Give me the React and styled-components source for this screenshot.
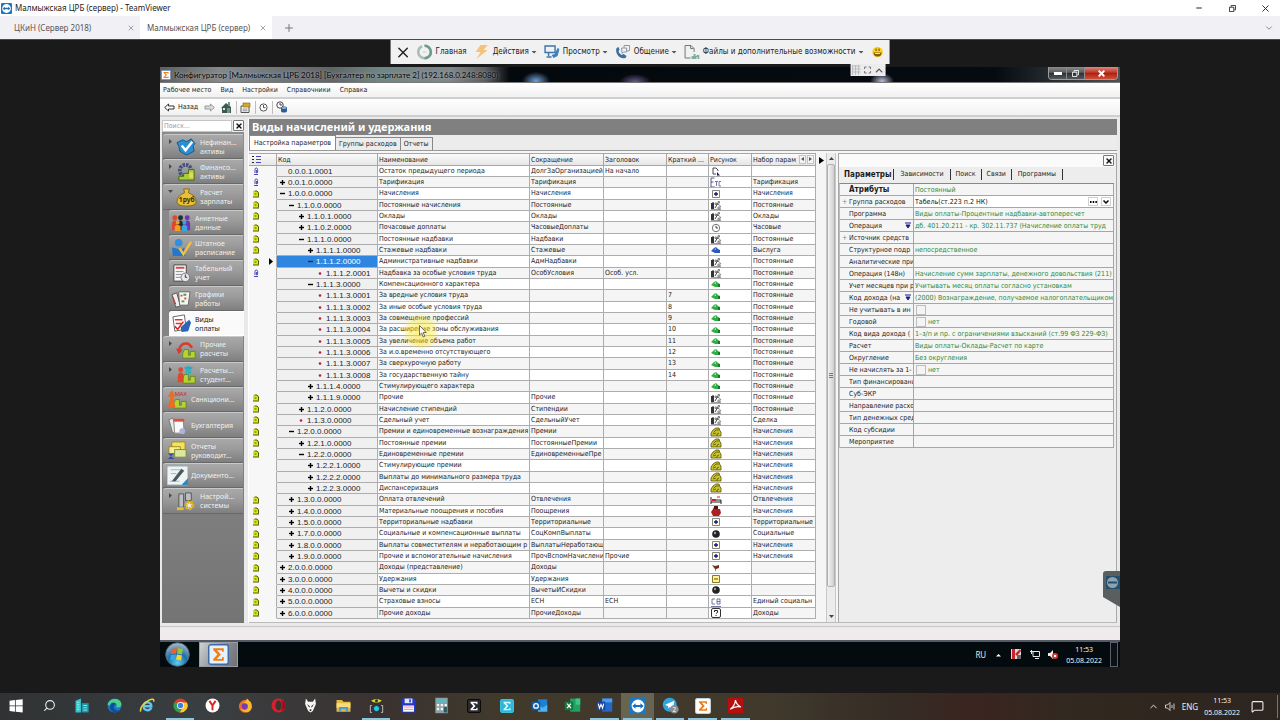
import React from "react";
import styled, { createGlobalStyle, css } from "styled-components";
import { X, Plus, Minus, ChevronDown, ChevronUp, Search, MessageSquare } from "lucide-react";

const TAHOMA = '"DejaVu Sans Condensed", "DejaVu Sans", sans-serif';
const SEGOE = '"Noto Sans", "Open Sans", sans-serif';

const GlobalStyle = createGlobalStyle`
  * { box-sizing: border-box; }
  body { margin: 0; background: #1a1a1a; }
  button, input { font: inherit; color: inherit; margin: 0; padding: 0; border: none; background: none; }
  svg { display: block; flex: none; }
  table { border-spacing: 0; table-layout: fixed; width: 100%; }
`;

const Page = styled.div`
  min-height: 100vh;
  display: flex;
  flex-direction: column;
  font: 7px/10px ${TAHOMA};
  color: #1c1c1c;
`;

/* ---------- TeamViewer window ---------- */

const TopBar = styled.header`
  display: flex;
  align-items: center;
  gap: 3px;
  height: 16px;
  padding-left: 1px;
  background: #fff;
  font: 8px/14px ${SEGOE};
`;

const TopTitle = styled.span`
  flex: 1;
`;

const TopButton = styled.button`
  width: 30px;
  height: 14px;
  display: flex;
  align-items: center;
  justify-content: center;
  color: #222;
`;

const SessionTabs = styled.nav`
  display: flex;
  align-items: stretch;
  height: 23px;
  background: #f1f0f5;
  color: #555;
  font: 8px/22px ${SEGOE};
`;

const SessionTab = styled.div`
  display: flex;
  align-items: center;
  justify-content: space-between;
  width: ${(p) => (p.$active ? 132 : 140)}px;
  padding: 0 4px 0 ${(p) => (p.$active ? 7 : 14)}px;
  background: ${(p) => (p.$active ? "#fff" : "transparent")};
`;

const TabsSpacer = styled.div`
  flex: 1;
`;

const TabsButton = styled.button`
  width: ${(p) => p.$wide || 10}px;
  display: flex;
  align-items: center;
  justify-content: center;
  color: #777;
`;

const Stage = styled.main`
  position: relative;
  flex: 1;
  display: flex;
  flex-direction: column;
  align-items: center;
  padding: 27px 0 26px;
  background: #1a1a1a;
  border-top: 1px solid #4a4a4a;
`;

const FloatBar = styled.div`
  position: absolute;
  top: 0;
  left: 50%;
  transform: translateX(-50%);
  z-index: 2;
  display: flex;
  align-items: center;
  gap: 7px;
  height: 24px;
  padding: 0 5px 0 6px;
  background: #f1f1f1;
  font: 8px/12px ${TAHOMA};
  white-space: nowrap;
  color: #222;
`;

const FloatItem = styled.button`
  display: flex;
  align-items: center;
  gap: 3px;
`;

const FloatHandle = styled.div`
  position: absolute;
  top: 24px;
  right: 4px;
  display: flex;
  align-items: center;
  gap: 2px;
  height: 12px;
  padding: 0 1px;
  background: #ececec;
`;

/* ---------- remote desktop ---------- */

const Remote = styled.section`
  position: relative;
  flex: 1;
  width: 75%;
  display: flex;
  flex-direction: column;
  background: #04090d;
`;

const WinTitle = styled.div`
  display: flex;
  align-items: center;
  gap: 3px;
  height: 16px;
  padding: 0 2px 0 1px;
  border-bottom: 1px solid #777;
  background:
    radial-gradient(ellipse 14px 9px at 376px 14px, #6f9fd8, transparent),
    radial-gradient(ellipse 16px 8px at 475px 15px, #6b5a8a, transparent),
    radial-gradient(ellipse 12px 8px at 722px 14px, #b9bcd8, transparent),
    linear-gradient(90deg, #5c6063 0, #83888a 60px, #5f6466 170px, #6f8583 220px, #80868a 290px, #5b5f63 325px, #04090d 350px, #060b12 87%, #4d5256 100%);
  font: 8px/14px Lato, ${SEGOE};
  color: #050505;
`;

const WinCaption = styled.span`
  flex: 1;
  text-shadow: 0 0 3px #bbb;
`;

const WinButtons = styled.div`
  display: flex;
  align-self: flex-start;
  height: 13px;
  border: 1px solid #9a9c9e;
  border-top: none;
  border-radius: 0 0 4px 4px;
  overflow: hidden;
`;

const WinButton = styled.button`
  display: flex;
  align-items: center;
  justify-content: center;
  width: ${(p) => (p.$close ? 32 : 18)}px;
  border-right: ${(p) => (p.$close ? "none" : "1px solid #8a8c8e")};
  background: ${(p) =>
    p.$close
      ? "linear-gradient(#d98a7c, #c0392b 45%, #a8200f 50%, #d0503a)"
      : "linear-gradient(#8a8c8e, #5a5c5f 45%, #2c2e31 50%, #55585c)"};
`;

const Strip = styled.div`
  display: flex;
  align-items: center;
  height: 17px;
  background: linear-gradient(#fff, #f1f1f1);
  border-bottom: 2px solid #cfcfcf;
`;

const MenuStrip = styled(Strip)`
  gap: 9px;
  height: 16px;
  padding-left: 3px;
`;

const ToolStrip = styled(Strip)`
  height: 18px;
  padding-left: 4px;
`;

const MenuItem = styled.button`
  line-height: 12px;
`;

const ToolButton = styled.button`
  display: flex;
  align-items: center;
  gap: 3px;
  height: 13px;
  padding: 0 4px 0 0;
  margin-right: ${(p) => (p.$sep ? 3 : 2)}px;
  border-right: ${(p) => (p.$sep ? "1px solid #bdbdbd" : "none")};
`;

const Body = styled.div`
  flex: 1;
  display: grid;
  grid-template-columns: 82px minmax(0, 1fr);
  gap: 4px;
  padding: 2px 3px 3px 2px;
  background: #e9e9e9;
`;

const Side = styled.aside`
  display: flex;
  flex-direction: column;
`;

const SearchRow = styled.div`
  display: flex;
  align-items: center;
  height: 13px;
  gap: 1px;
`;

const SearchInput = styled.input`
  flex: 1;
  min-width: 0;
  height: 12px;
  padding: 0 1px;
  background: #fff;
  border: 1px solid #c4c4c4;
  &::placeholder { color: #999; opacity: 1; }
`;

const CloseBox = styled.button`
  display: flex;
  align-items: center;
  justify-content: center;
  width: 11px;
  height: 11px;
  border: 1px solid #777;
  border-radius: 1px;
  background: #fafafa;
  color: #111;
`;

const NavList = styled.nav`
  flex: 1;
  padding: 2px 1px 0;
  background: linear-gradient(#8c8c8c, #7d7d7d 80%, #747474);
`;

const NavItem = styled.button`
  display: flex;
  align-items: center;
  gap: 3px;
  width: ${(p) => (p.$sub ? 74 : 80)}px;
  height: 25px;
  margin-left: ${(p) => (p.$sub ? 6 : 0)}px;
  padding-left: ${(p) => (p.$sub ? 2 : 4)}px;
  text-align: left;
  font: 7px/9px ${SEGOE};
  white-space: pre-line;
  color: #f0f0f0;
  border-top: 1px solid #c9c9c9;
  border-bottom: 1px solid #686868;
  border-radius: 3px 0 0 0;
  background: linear-gradient(#a9a9a9, #9a9a9a 45%, #7f7f7f);
  &:nth-child(3n) { height: 26px; }
  ${(p) =>
    p.$active &&
    css`
      width: 75px;
      color: #222;
      background: #fafafa;
      border-color: #fff;
    `}
`;

const NavArrow = styled.svg`
  align-self: flex-start;
  margin: 4px 0 0 1px;
`;

const Content = styled.div`
  display: flex;
  flex-direction: column;
  min-width: 0;
  border-left: 1px solid #fff;
`;

const Heading = styled.h1`
  margin: 0;
  height: 16px;
  padding-left: 3px;
  background: #808080;
  color: #fff;
  font: bold 11px/16px "Noto Sans", sans-serif;
`;

const ViewTabs = styled.div`
  display: flex;
  align-items: flex-end;
  height: 16px;
  padding-left: 1px;
  border-bottom: 1px solid #999;
  background: #ececec;
`;

const ViewTab = styled.button`
  height: ${(p) => (p.$active ? 15 : 13)}px;
  padding: 0 ${(p) => (p.$active ? 4 : 3)}px;
  border: 1px solid #888;
  border-bottom: none;
  margin-left: -1px;
  background: ${(p) => (p.$active ? "#fff" : "#ececec")};
`;

const Split = styled.div`
  flex: 1;
  display: grid;
  grid-template-columns: minmax(0, 1fr) 10px 10px 281px;
  padding-top: 2px;
  background: #f6f6f6;
  border-bottom: 1px solid #bbb;
`;

const DataTable = styled.table`
  align-self: start;
  th {
    height: 13px;
    padding: 0 1px;
    font-weight: normal;
    text-align: left;
    white-space: nowrap;
    overflow: hidden;
    border: solid #a6a6a6;
    border-width: 1px 1px 1px 0;
    background: linear-gradient(#fbfbfb, #e6e6e6);
  }
  td {
    height: 11px;
    padding: 0 1px;
    line-height: 9px;
    white-space: nowrap;
    overflow: hidden;
    border: solid #adadad;
    border-width: 0 1px 1px 0;
    vertical-align: middle;
    background: #fff;
  }
  tr:nth-child(3n) td { height: 12px; }
  tr:nth-child(even) td { background: #f5f5f5; }
`;

const Col = styled.col`
  width: ${(p) => (p.$w ? `${p.$w}px` : "auto")};
`;

const DataRow = styled.tr`
  && td:nth-child(1),
  && td:nth-child(2) {
    background: #f7f7f7;
    border-color: transparent;
  }
  && td:nth-child(2) { border-right-color: #adadad; }
  && td:nth-child(1) { padding-left: 4px; }
  && td:nth-child(3) {
    background: ${(p) => (p.$selected ? "#2f86e0" : "#f0f0f0")};
    color: ${(p) => (p.$selected ? "#fff" : "inherit")};
  }
  && td:nth-child(8) { background: #fff; }
`;

const Code = styled.span`
  display: flex;
  align-items: center;
  padding-left: ${(p) => Math.round(p.$depth * 9.4)}px;
  font: 8px/9px "Liberation Sans", sans-serif;
`;

const Twig = styled.svg`
  margin: 0 2px 0 1px;
  color: ${(p) => (p.$dark ? "#14305a" : "#000")};
`;

const HeaderPager = styled.span`
  float: right;
  display: flex;
  gap: 1px;
  height: 9px;
  padding-left: 1px;
  background: #ececec;
`;

const PagerButton = styled.button`
  width: 7px;
  height: 9px;
  border: 1px solid #c4c4c4;
  background: #f4f4f4;
  display: flex;
  align-items: center;
  justify-content: center;
`;

const Gutter = styled.div`
  padding: 4px 0 0 3px;
  background: #f5f5f5;
`;

const ScrollBar = styled.div`
  display: flex;
  flex-direction: column;
  align-items: center;
  background: #ececec;
  border: solid #c8c8c8;
  border-width: 0 1px;
`;

const ScrollArrow = styled.button`
  width: 8px;
  height: 11px;
  display: flex;
  align-items: center;
  justify-content: center;
`;

const Thumb = styled.div`
  flex: 1;
  width: 8px;
  margin-bottom: 24px;
  display: flex;
  align-items: center;
  justify-content: center;
  border: 1px solid #b0b0b0;
  border-radius: 2px;
  background: linear-gradient(90deg, #f2f2f2, #cfcfcf);
`;

const Props = styled.aside`
  min-width: 0;
  display: flex;
  flex-direction: column;
  margin-left: 2px;
  padding-right: 2px;
  border: solid #a8a8a8;
  border-width: 1px 1px 0 1px;
  background: #ededed;
`;

const PropsTop = styled.div`
  display: flex;
  justify-content: flex-end;
  align-items: center;
  height: 13px;
  background: #fafafa;
`;

const PropTabs = styled.div`
  display: flex;
  align-items: center;
  height: 15px;
  margin-bottom: 1px;
`;

const PropTab = styled.button`
  height: 11px;
  padding: 0 ${(p) => (p.$wide ? 6 : 5)}px;
  line-height: 11px;
  border-right: 1px solid #333;
  ${(p) =>
    p.$active &&
    css`
      padding: 0 2px 0 5px;
      font-weight: bold;
      font-size: 8px;
    `}
`;

const PropTable = styled.table`
  border-top: 1px solid #888;
  border-left: 1px solid #bbb;
  th, td {
    height: 12px;
    padding: 0 1px;
    font-weight: normal;
    text-align: left;
    line-height: 10px;
    white-space: nowrap;
    overflow: hidden;
    border: solid #a6a6a6;
    border-width: 0 1px 1px 0;
    background: #f5f5f5;
  }
  th { padding: 0; }
  td { color: #2c8a3c; }
`;

const PropName = styled.span`
  display: flex;
  align-items: center;
  font-weight: ${(p) => (p.$bold ? "bold" : "normal")};
  font-size: ${(p) => (p.$bold ? 8 : 7)}px;
`;

const PropSign = styled.span`
  flex: none;
  width: 9px;
  padding-left: 2px;
  color: #888;
`;

const PropText = styled.span`
  flex: 1;
  min-width: 0;
  overflow: hidden;
`;

const EditCell = styled.span`
  display: flex;
  align-items: center;
  gap: 3px;
  height: 11px;
  margin: 0 -1px;
  padding: 0 2px 0 1px;
  background: #fff;
  color: #111;
`;

const EditInput = styled.input`
  flex: 1;
  min-width: 0;
  height: 10px;
`;

const SmallButton = styled.button`
  width: 10px;
  height: 9px;
  border: 1px solid #d0d0d0;
  display: flex;
  align-items: center;
  justify-content: center;
`;

const CheckLabel = styled.label`
  display: flex;
  align-items: center;
  gap: 2px;
`;

const CheckBox = styled.input`
  appearance: none;
  width: 10px;
  height: 10px;
  margin-left: 1px;
  border: 1px solid #bdbdbd;
  background: #f4f4f4;
`;

const StatusBar = styled.div`
  height: 14px;
  background: #efebec;
  border-top: 1px solid #c6c6c6;
`;

const RemoteTaskbar = styled.footer`
  display: flex;
  align-items: center;
  height: 27px;
  padding-left: 5px;
  border-top: 2px solid #525b63;
  background: #040b0f;
  color: #e8e8e8;
  font: 7px/10px ${SEGOE};
`;

const OrbButton = styled.button`
  margin-right: 9px;
`;

const RunningApp = styled.button`
  width: 39px;
  height: 25px;
  display: flex;
  align-items: center;
  justify-content: center;
  border: 1px solid #999da1;
  background: linear-gradient(120deg, #cfd1d4, #85898d 60%, #6d7175);
`;

const Tray = styled.div`
  display: flex;
  align-items: center;
  gap: ${(p) => p.$gap}px;
  margin-left: auto;
`;

const TrayLang = styled.span`
  font-size: 8px;
`;

const Clock = styled.time`
  text-align: center;
  white-space: pre-line;
  line-height: ${(p) => p.$line || 11}px;
  color: #f4f4f4;
`;

const ShowDesktop = styled.button`
  width: 8px;
  height: 25px;
  margin-right: 2px;
  border: 1px solid #596067;
  background: #0b1116;
`;

const SideFlap = styled.div`
  position: absolute;
  right: 0;
  top: 504px;
`;

const Pointer = styled.div`
  position: absolute;
  left: 242px;
  top: 246px;
  width: 38px;
  height: 38px;
  border-radius: 50%;
  padding: 12px 0 0 17px;
  background: radial-gradient(rgba(250, 232, 40, 0.6), rgba(250, 235, 60, 0.4) 50%, transparent 70%);
`;

/* ---------- host taskbar ---------- */

const Taskbar = styled.footer`
  display: flex;
  align-items: stretch;
  height: 27px;
  padding-right: 2px;
  background: linear-gradient(90deg, #303233, #3a3f42 16%, #3a3230 30%, #413a2b 40%, #40392c 60%, #352c25 70%, #3a2420 76%, #31291f 84%, #2d251f);
  color: #eee;
  font: 7px/11px ${SEGOE};
`;

const TaskButton = styled.button`
  width: 33px;
  display: flex;
  align-items: center;
  justify-content: center;
  border-bottom: 2px solid transparent;
  &:nth-child(3n) { width: 32px; }
  ${(p) => p.$running && css`
    border-image: linear-gradient(90deg, transparent 10%, #8cc6de 10%, #8cc6de 90%, transparent 90%) 1;
    border-width: 0 0 2px;
    border-style: solid;
  `}
  ${(p) => p.$active && css`background: #686452;`}
`;

const DesktopEdge = styled.button`
  width: 4px;
  height: 23px;
  border-right: 1px solid #777;
`;

/* ---------- drawings ---------- */

const TeamViewerMark = ({ size = 11 }) => (
  <svg width={size} height={size} viewBox="0 0 20 20">
    <rect width="20" height="20" rx="2" fill="#1a78c8" />
    <circle cx="10" cy="10" r="8" fill="#fff" />
    <path d="M2.8 10 7 6.6v2.2h6V6.6l4.2 3.4-4.2 3.4v-2.2H7v2.2z" fill="#1a6fc0" />
  </svg>
);

const SigmaMark = ({ size = 10, bg = "#fff", fg = "#ef7d1a", line = "#4a6ea8" }) => (
  <svg width={size} height={size} viewBox="0 0 20 20">
    <rect x="0.7" y="0.7" width="18.6" height="18.6" rx="2" fill={bg} stroke={line} strokeWidth="1.4" />
    <path d="M5 4h10v3.4h-1.4L13 6H8.6l3.6 4-3.8 4.2H13l.8-1.8H15V16H5v-1.6L9 10 5 5.6z" fill={fg} />
  </svg>
);

const Caret = () => (
  <svg width="5" height="4" viewBox="0 0 5 4"><path d="M0 1h5L2.5 3.5z" fill="#555" /></svg>
);

const Restore = ({ size = 8, color = "#222" }) => (
  <svg width={size} height={size} viewBox="0 0 8 8" fill="none" stroke={color}>
    <path d="M.5 2.5h5v5h-5zM2.5 2V.5h5v5H6" />
  </svg>
);

const floatIcons = {
  ring: (
    <svg width="16" height="16" viewBox="0 0 16 16" fill="none" strokeWidth="2.6">
      <circle cx="8" cy="8" r="6.3" stroke="#a9bdb4" strokeDasharray="36 4" transform="rotate(-90 8 8)" />
      <path d="M8 1.7A6.3 6.3 0 0 1 8 14.3" stroke="#6b9c8c" />
      <path d="M6 8h4" stroke="#c4ccc8" strokeWidth="1" />
    </svg>
  ),
  bolt: <svg width="16" height="16" viewBox="0 0 16 16"><path d="M7 1h7l-4 5h4L3 15l4-7H2z" fill="#f5c27a" /></svg>,
  screen: (
    <svg width="16" height="16" viewBox="0 0 16 16" fill="none" stroke="#3c74a8" strokeWidth="1.4">
      <path d="M1.5 2h10v6.5h-10zM5 9v3M3 13h5" />
      <path d="m8 11 3-1 3-6 2 1-2 7-4 2z" fill="#3f80bd" stroke="none" />
    </svg>
  ),
  phone: (
    <svg width="16" height="16" viewBox="0 0 16 16">
      <path d="M2 4c-2 5 3 12 9 10l1-2-3-2-2 1C5 10 4 8 4 7l1-1-1-3z" fill="#3c6f9e" />
      <path d="M7 4h5v4H9L7.500 9.500zM9.500 3.500v-2H15v5l-2.500.5" fill="#f1f1f1" stroke="#8b96a2" />
    </svg>
  ),
  file: (
    <svg width="16" height="16" viewBox="0 0 16 16">
      <path d="M7 14H1.500V1.500h6l3 3V8M7 1.500v3h3" fill="none" stroke="#6c7a75" />
      <path d="M8 15v-3h2v-2h2v2h1v-1h3v4h-2v-2h-1v2z" fill="#7fae9e" />
    </svg>
  ),
};

const Smile = () => (
  <svg width="12" height="12" viewBox="0 0 12 12">
    <circle cx="6" cy="6" r="5.300" fill="#f8d020" />
    <path d="M4.500 2.500v2.500M7.500 2.500v2.500" stroke="#6a4a08" />
    <path d="M2 6.500h8a4 4 0 0 1-8 0z" fill="#8a5a10" />
    <path d="M3.500 7.500h5" stroke="#f4e6b0" />
  </svg>
);

const toolIcons = {
  back: <svg width="11" height="9" viewBox="0 0 11 9"><path d="M.7 4.500 4.500 1v2H10v3H4.500v2z" fill="#fff" stroke="#333" /></svg>,
  next: <svg width="11" height="9" viewBox="0 0 11 9"><path d="M10.300 4.500 6.500 1v2H1v3h5.500v2z" fill="#ddd" stroke="#999" /></svg>,
  home: (
    <svg width="11" height="11" viewBox="0 0 11 11">
      <path d="M0 6 5 1l5 4v6H1V6z" fill="#3c5a50" /><path d="M7 0h2v4H7zM6 6h3v5H6z" fill="#6d9486" /><path d="M2 6h2v2H2z" fill="#dfe9e4" />
    </svg>
  ),
  sheet: (
    <svg width="11" height="11" viewBox="0 0 11 11">
      <path d="M1 4h8v6.500H1z" fill="#fff" stroke="#555" /><path d="M3 1h7v4H3z" fill="#d8a928" stroke="#7a6418" strokeWidth=".6" /><path d="M2.500 7h5M2.500 8.800h5" stroke="#888" />
    </svg>
  ),
  clock: (
    <svg width="9" height="9" viewBox="0 0 9 9" fill="none" stroke="#555">
      <circle cx="4.500" cy="4.500" r="3.600" fill="#fff" /><path d="M4.500 2v2.700h2" />
    </svg>
  ),
  db: (
    <svg width="12" height="12" viewBox="0 0 12 12">
      <circle cx="4" cy="4" r="3.200" fill="#fff" stroke="#444" /><path d="M4 2v2h2" fill="none" stroke="#444" />
      <path d="M5 7c0-2 6-2 6 0v3c0 2-6 2-6 0z" fill="#2c5c98" /><ellipse cx="8" cy="7" rx="2.500" ry="1" fill="#8ab0d8" />
    </svg>
  ),
};

const person = (x, c) => (
  <g fill={c}><circle cx={x} cy="5" r="2.600" /><path d={`M${x - 3} 18v-6q0-4 3-4t3 4v6z`} /></g>
);
const bars = <path d="M9 10h4v6h2v-4h5v7H7v-5z" fill="#b5d334" stroke="#5e7f16" strokeWidth=".8" />;

const navIcons = {
  cube: <><path d="m1 6 6-3 4 2 5-3 4 5-2 2 1 6-8 4-7-4-1-5z" fill="#2a8fd4" stroke="#135a90" /><path d="m6 9 4 5 7-9" fill="none" stroke="#fff" strokeWidth="2.500" /></>,
  gear: <><circle cx="10" cy="9" r="6" fill="none" stroke="#46517e" strokeWidth="4" strokeDasharray="2.500 1" /><path d="M8 12h5v-4h6v11H3v-4h5z" fill="#a8cf3a" stroke="#4b6a14" /><path d="M14 11h4v6h-4z" fill="#e8d85a" /></>,
  money: <><path d="M8 1h6l-1 4q8 3 8 10-1 4-10 4T1 15q0-7 8-10z" fill="#e7bf3a" stroke="#8d6a10" /><text x="3" y="15" fontSize="7" fontWeight="bold" fill="#3c2c00">1руб</text></>,
  people: <>{person(4, "#e0482e")}{person(17, "#6a35b8")}{person(10, "#2a2a30")}<g fill="#f0a020"><circle cx="7" cy="10" r="2" /><path d="M4 19v-5q3-3 6 0v5z" /></g><g fill="#3aa4e0"><circle cx="14" cy="10" r="2" /><path d="M11 19v-5q3-3 6 0v5z" /></g></>,
  staff: <><circle cx="8" cy="5" r="4" fill="#2f8fe0" /><path d="M2 19 1 10l5 1 4 2 4-3 1 9z" fill="#2478cc" /><path d="m9 11 4 6 8-13" fill="none" stroke="#f4c040" strokeWidth="2.500" /></>,
  card: <><path d="M3 1h13v17H3z" fill="#f6f6f6" stroke="#444" /><path d="M5 4h9" stroke="#d44" strokeWidth="2" /><path d="M5 8h8M5 11h7M5 14h5" stroke="#889" /><circle cx="15" cy="14" r="4.500" fill="#e8e8ea" stroke="#777" /><path d="M15 11v3h2" fill="none" stroke="#333" /></>,
  charts: <><path d="m1 6 5-2 4 14-5 1z" fill="#eee" stroke="#555" /><path d="M8 3h12l-2 14H9z" fill="#f6f6f0" stroke="#666" /><path d="M10 6h2v2h-2zM14 9h2v2h-2z" fill="#d44" /><path d="M13 5h3v2h-3zM11 12h3v2h-3z" fill="#4a9a4a" /><path d="m2 8 3 8" stroke="#c33" /></>,
  pay: <><path d="M2 3 14 1l2 15-12 2z" fill="#fff" stroke="#666" /><path d="M4 6h8M5 10h6" stroke="#d33" strokeWidth="1.500" /><path d="m4 13 3 3 6-8" fill="none" stroke="#d22" strokeWidth="1.600" /><path d="m10 14 9-8 2 3-3 9-7 1z" fill="#2a66b8" /></>,
  recalc: <>{bars}<path d="M3 11Q5 2 13 4l4 4" fill="none" stroke="#d83a2a" strokeWidth="2.600" /><path d="m0 9 7 1-4 5z" fill="#d83a2a" /></>,
  student: <>{bars}{person(5, "#e0482e")}<path d="m8 3 5-2 5 2-5 3z" fill="#2aa7c8" /><circle cx="13" cy="7" r="3" fill="#36b2b0" /></>,
  max: <>{bars}<path d="M4 7 1 7 5 0l4 7H6l3 11H1z" fill="#ef6a22" /><text x="8" y="6" fontSize="6" fill="#c22">MAX</text></>,
  books: <><path d="m2 4 4-2 4 14-4 2z" fill="#e8ece8" stroke="#777" /><path d="M7 4h10l1 14H8z" fill="#fafafa" stroke="#888" /><path d="M7 3h11v3H7z" fill="#d95048" /><circle cx="16" cy="16" r="3" fill="#aab4dc" /></>,
  report: <><path d="M5 1h14v11H5z" fill="#f3e25a" stroke="#9a8a22" /><path d="M2 6h12v8H2z" fill="#f8ee90" stroke="#9a8a22" /><path d="M8 9h12v8H8z" fill="#dce8a0" stroke="#7b8a42" /><path d="M1 13h7l-4 3 4 3H1l3-3z" fill="#2d4ea8" /></>,
  pen: <><path d="M0 0h22v20H0z" fill="#eef3f4" stroke="#8aa" /><path d="M4 4h10M4 8h6M3 16h10" stroke="#9bb" /><path d="M5 16 15 3l3 2L9 16z" fill="#4a5a5c" /><path d="m16 19 6-6v7h-6z" fill="#2a8ac0" /></>,
  setup: <><path d="M3 2h5v14H3zM10 1h6v8h-6z" fill="#bcc0c4" stroke="#555" /><path d="M1 16h7v3H1z" fill="#e0c030" /><circle cx="14" cy="14" r="3.500" fill="#eee" stroke="#e0b010" strokeWidth="3.500" strokeDasharray="2.400 1" /></>,
};

const NavIcon = ({ name }) => <svg width="21" height="21" viewBox="0 0 22 20">{navIcons[name]}</svg>;

const picIcons = {
  doc: <><path d="M3 2h3l2 2v1M3 2v6h3" fill="none" stroke="#334" strokeWidth=".9" /><path d="m7 6 3 3.500H7z" fill="#114" /></>,
  etc: <><path d="M4.500 1H1v9h4M1 5h2.500" fill="none" stroke="#448" strokeWidth=".9" /><path d="M5 4.500h3M6.500 4.500V9M11 4.500H9V9h2" fill="none" stroke="#669" strokeWidth=".9" /></>,
  plus: <><path d="M2.500 1.500h7v7h-7z" fill="#fffbe0" stroke="#666" strokeWidth=".8" /><path d="M4 5h4M6 3v4" stroke="#118" strokeWidth="1.300" /></>,
  minus: <><path d="M2.500 1.500h7v7h-7z" fill="#fbf3a0" stroke="#8a7a20" /><path d="M4 5h4" stroke="#a06a10" strokeWidth="1.300" /></>,
  calc: <><path d="M1 3h3v6H1z" fill="#333" /><path d="M2 2h2v1H2z" fill="#888" /><path d="m5 8 3-5" stroke="#444" /><path d="M5 3h1.500v1.500H5zM8 1.500h1.500V3H8zM7 4.500h2L11 7M8 7h2v2H8z" fill="none" stroke="#555" strokeWidth=".7" /><path d="M1 9.400h10" stroke="#777" strokeWidth=".8" /></>,
  clock: <><circle cx="6" cy="5" r="3.700" fill="#fff" stroke="#666" strokeWidth=".9" /><path d="M6 2.800V5h2" fill="none" stroke="#333" strokeWidth=".9" /></>,
  blue: <><path d="m1 6 3-3 2-1 2 2 2 1v3H5z" fill="#2a5ac0" /><path d="M6 2v3H4z" fill="#7aa0e8" /></>,
  green: <><path d="m1 6 3-3 2-1 2 2 2 1v3H5z" fill="#2fae42" /><path d="M6 2v3H4z" fill="#8fe89a" /><path d="M8 5h2v3H8z" fill="#127a28" /></>,
  coins: <><path d="M1 9V6l2-3 3-2h3l1 3 1 1v4z" fill="#c8c42a" stroke="#55520c" strokeWidth=".8" /><path d="M3.500 5.500 6 3h3M3 7l3-1M7 9V7l2-1" fill="none" stroke="#55520c" strokeWidth=".8" /></>,
  bed: <><path d="M1 2v7M1 7h10M11 5v4M5 5h6" stroke="#222" fill="none" /><path d="M2 4h4v2H2z" fill="#c22" /><path d="M7 2h3" stroke="#c22" /></>,
  bag: <><path d="M4 1h3l1 2h2l1 4-2 3H3L1 6l2-3z" fill="#b01e22" /><path d="M4 0h4v3H4z" fill="#4a1414" /></>,
  ball: <><circle cx="6" cy="5" r="3.800" fill="#222" /><circle cx="5" cy="4" r="1.200" fill="#999" /></>,
  flag: <path d="m2 2 3 1 4-1v3L6 6v3L5 6z" fill="#7a2c1c" />,
  sv: <path d="M5 2H2v5h3M7 2v5h3V2H7M7 4.500h3M1 9.500h10" fill="none" stroke="#669" strokeWidth=".9" />,
  help: <><rect x="1.500" y=".5" width="9" height="9" rx="1.500" fill="#fff" stroke="#333" /><path d="M4.500 4V2.500h3v2L6 5.500M6 7v1" fill="none" stroke="#222" /></>,
};

const Pic = ({ name }) => <svg width="12" height="10" viewBox="0 0 12 10">{picIcons[name]}</svg>;

const Mark = ({ kind }) =>
  kind === "clip" ? (
    <svg width="7" height="8" viewBox="0 0 7 8" fill="none" stroke="#4646b4"><path d="M2 6V2.500q0-1.500 1.300-1.500t1.300 1.500V5q0 1-1 1V3M1 7.500h4" /></svg>
  ) : (
    <svg width="7" height="8" viewBox="0 0 7 8"><path d="M0 1h5l1 2v4H0z" fill="#dbe81c" /><path d="M1.500 1H4l1.500 2v3.500M1.500 4h2M0 7h6" fill="none" stroke="#4e5c08" /></svg>
  );

const taskIcons = {
  win: <path d="m2 5 7-1v7H2zm8-1 9-1v8h-9zM2 12h7v7l-7-1zm8 0h9v8l-9-1z" fill="#fff" />,
  city: <><path d="M2 5 9 2v18H2z" fill="#35c4cf" /><path d="M10 8h9v12h-9z" fill="#1f98a8" /><path d="M4 7h3M4 10h3M4 13h3M4 16h3M12 11h5M12 14h5M12 17h5" stroke="#bdf3f5" /></>,
  edge: <><circle cx="11" cy="11" r="9" fill="#1b77cf" /><path d="M2 10C4 0 20 0 20 10q-1 5-7 3 2-3-1-5-5-2-7 3z" fill="#4ccf8c" /><path d="M6 9q4-4 7 0-3 1-3 5 2 5 8 3-3 4-8 3-7-4-4-11z" fill="#0d4f9c" /></>,
  ie: <><path d="M16 14q-2 4-6 3-5-1-4-6 1-5 6-4 4 1 4 5H7" fill="none" stroke="#5cc5f0" strokeWidth="3" /><path d="M2 19Q1 11 13 4q7-3 6 2" fill="none" stroke="#f1d23a" strokeWidth="2" /></>,
  chrome: <><circle cx="11" cy="11" r="9" fill="#e0392e" /><path d="M3 7a9 9 0 0 0 7 13l4-8-3-4z" fill="#2ea04e" /><path d="M11 7h8.300A9 9 0 0 1 10 20l5-8z" fill="#f7cb30" /><circle cx="11" cy="11" r="4.500" fill="#fff" /><circle cx="11" cy="11" r="3.500" fill="#3f7ee8" /></>,
  yandex: <><circle cx="11" cy="11" r="9" fill="#fff" /><path d="m7 5 4 6v6m0-6 4-6" fill="none" stroke="#e02020" strokeWidth="2.500" /></>,
  firefox: <><circle cx="11" cy="12" r="8.500" fill="#f26a2a" /><path d="m5 3 3 4 3-1 2-4 5 5q3 8-3 12-8 2-10-4 5 4 9 0z" fill="#fbb92e" /><circle cx="10" cy="12" r="4" fill="#6f3fb4" /></>,
  opera: <><circle cx="11" cy="11" r="9" fill="#d8202c" /><ellipse cx="11" cy="11" rx="4" ry="6.500" fill="#3a3330" /><path d="M14 4q6 2 6 7t-6 7q4-7 0-14z" fill="#96101c" /></>,
  alien: <><path d="m5 2 3 4h6l3-4 1 7-4 9-3 2-3-2-4-9z" fill="#f5f5f5" /><path d="m6.500 9 3.500 3-.5 2zm9 0L12 12l.5 2zM10 16h2v2h-2z" fill="#222" /></>,
  folder: <><path d="M2 4h7l2 2h9v13H2z" fill="#e7b93c" /><path d="M2 8h18v6H2z" fill="#f8dc7c" /><path d="M5 13h12v6h-3v-3H8v3H5z" fill="#4a9fd8" /></>,
  eye: <><path d="M4 5q7-5 14 0-7 5-14 0z" fill="#d8e02a" /><circle cx="11" cy="5" r="2" fill="#333" /><path d="M5 11H3v9h2M17 11h2v9h-2" stroke="#ddd" fill="none" /><circle cx="11" cy="15" r="4" fill="#2cc4e4" stroke="#123" /></>,
  floppy: <><path d="M2 2h16l2 2v16H2z" fill="#2437c8" /><path d="M6 2h10v6H6z" fill="#dfe6f5" /><path d="M12 3h2v4h-2z" fill="#2437c8" /><path d="M4 11h14v8H4z" fill="#fff" /><path d="M5 13h12M5 16h12" stroke="#e86a7a" /></>,
  calcApp: <><path d="M3 1h16v20H3z" fill="#8fa0a4" /><path d="M5 3h12v4H5z" fill="#45c2cc" /><path d="M5 9h3v3H5zm5 0h3v3h-3zM5 14h3v3H5zm5 0h3v3h-3zm5-5h3v3h-3z" fill="#f2f2f2" /><path d="M14 13h4v7h-4z" fill="#2c5a60" /></>,
  outlook: <><path d="M9 3h12v15H9z" fill="#1f7fd0" /><path d="m9 10 6 4 6-4v9H9z" fill="#4bb4f0" /><rect x="1" y="6" width="11" height="11" fill="#0f5ea8" /><circle cx="6.500" cy="11.500" r="3" fill="none" stroke="#fff" strokeWidth="1.600" /></>,
  excel: <><path d="M8 2h13v17H8z" fill="#22a160" /><path d="M15 2h6v8h-6z" fill="#3cc482" /><rect x="1" y="6" width="11" height="11" fill="#127a42" /><path d="m4 8.500 5 6m0-6-5 6" stroke="#fff" strokeWidth="1.600" /></>,
  word: <><path d="M8 2h13v17H8z" fill="#2468c8" /><path d="M8 2h13v5H8z" fill="#4a9df0" /><rect x="1" y="6" width="11" height="11" fill="#1846a0" /><path d="m3 8.500 1.500 6 2-5 2 5 1.500-6" fill="none" stroke="#fff" strokeWidth="1.400" /></>,
  telegram: <><circle cx="10" cy="10" r="9" fill="#32a4dc" /><path d="m4 10 12-5-2 11-4-3-2 2v-3z" fill="#fff" /><circle cx="16" cy="16" r="5.500" fill="#8a8f92" /><text x="13.500" y="19" fontSize="8" fill="#fff">2</text></>,
  acrobat: <><rect x="1" y="1" width="20" height="20" rx="2" fill="#b80f0c" /><path d="M11 4q1 6 7 9-7-2-14 3 6-4 7-12z" fill="none" stroke="#fff" strokeWidth="1.500" /></>,
};

const TaskIcon = ({ name }) => <svg width="17" height="17" viewBox="0 0 22 22">{taskIcons[name]}</svg>;

/* ---------- data ---------- */

const navItems = [
  ["cube", "Нефинан...\nактивы", "right"],
  ["gear", "Финансо...\nактивы", "right"],
  ["money", "Расчет\nзарплаты", "down"],
  ["people", "Анкетные\nданные", "sub"],
  ["staff", "Штатное\nрасписание", "sub"],
  ["card", "Табельный\nучет", "sub"],
  ["charts", "Графики\nработы", "sub"],
  ["pay", "Виды\nоплаты", "sub", true],
  ["recalc", "Прочие\nрасчеты", "right"],
  ["student", "Расчеты...\nстудент...", "right"],
  ["max", "Санкциони...", ""],
  ["books", "Бухгалтерия", ""],
  ["report", "Отчеты\nруководит...", ""],
  ["pen", "Документо...", ""],
  ["setup", "Настрой...\nсистемы", "right"],
];

// mark, depth, twig, code, name, short name, title, brief, picture, set
const rows = [
  ["clip", 0, "", "0.0.0.1.0001", "Остаток предыдущего периода", "ДолгЗаОрганизацией", "На начало", "", "doc", ""],
  ["clip", 0, "+", "0.0.1.0.0000", "Тарификация", "Тарификация", "", "", "etc", "Тарификация"],
  ["d", 0, "-", "1.0.0.0.0000", "Начисления", "Начисления", "", "", "plus", "Начисления"],
  ["d", 1, "-", "1.1.0.0.0000", "Постоянные начисления", "Постоянные", "", "", "calc", "Постоянные"],
  ["d", 2, "+", "1.1.0.1.0000", "Оклады", "Оклады", "", "", "calc", "Оклады"],
  ["d", 2, "+", "1.1.0.2.0000", "Почасовые доплаты", "ЧасовыеДоплаты", "", "", "clock", "Часовые"],
  ["d", 2, "-", "1.1.1.0.0000", "Постоянные надбавки", "Надбавки", "", "", "calc", "Постоянные"],
  ["d", 3, "+", "1.1.1.1.0000", "Стажевые надбавки", "Стажевые", "", "", "blue", "Выслуга"],
  ["d", 3, "-", "1.1.1.2.0000", "Административные надбавки", "АдмНадбавки", "", "", "calc", "Постоянные", true],
  ["clip", 4, ".", "1.1.1.2.0001", "Надбавка за особые условия труда", "ОсобУсловия", "Особ. усл.", "", "calc", "Постоянные"],
  ["", 3, "-", "1.1.1.3.0000", "Компенсационного характера", "", "", "", "green", "Постоянные"],
  ["", 4, ".", "1.1.1.3.0001", "За вредные условия труда", "", "", "7", "green", "Постоянные"],
  ["", 4, ".", "1.1.1.3.0002", "За иные особые условия труда", "", "", "8", "green", "Постоянные"],
  ["", 4, ".", "1.1.1.3.0003", "За совмещение профессий", "", "", "9", "green", "Постоянные"],
  ["", 4, ".", "1.1.1.3.0004", "За расширение зоны обслуживания", "", "", "10", "green", "Постоянные"],
  ["", 4, ".", "1.1.1.3.0005", "За увеличение объема работ", "", "", "11", "green", "Постоянные"],
  ["", 4, ".", "1.1.1.3.0006", "За и.о.временно отсутствующего", "", "", "12", "green", "Постоянные"],
  ["", 4, ".", "1.1.1.3.0007", "За сверхурочную работу", "", "", "13", "green", "Постоянные"],
  ["", 4, ".", "1.1.1.3.0008", "За государственную тайну", "", "", "14", "green", "Постоянные"],
  ["", 3, "+", "1.1.1.4.0000", "Стимулирующего характера", "", "", "", "green", "Постоянные"],
  ["d", 3, "+", "1.1.1.9.0000", "Прочие", "Прочие", "", "", "calc", "Постоянные"],
  ["d", 2, "+", "1.1.2.0.0000", "Начисление стипендий", "Стипендии", "", "", "calc", "Постоянные"],
  ["d", 2, ".", "1.1.3.0.0000", "Сдельный учет", "СдельныйУчет", "", "", "calc", "Сделка"],
  ["d", 1, "-", "1.2.0.0.0000", "Премии и единовременные вознаграждения", "Премии", "", "", "coins", "Начисления"],
  ["d", 2, "+", "1.2.1.0.0000", "Постоянные премии", "ПостоянныеПремии", "", "", "coins", "Начисления"],
  ["d", 2, "-", "1.2.2.0.0000", "Единовременные премии", "ЕдиновременныеПре", "", "", "coins", "Начисления"],
  ["", 3, "+", "1.2.2.1.0000", "Стимулирующие премии", "", "", "", "coins", "Начисления"],
  ["", 3, "+", "1.2.2.2.0000", "Выплаты до минимального размера труда", "", "", "", "coins", "Начисления"],
  ["", 3, "+", "1.2.2.3.0000", "Диспансеризация", "", "", "", "coins", "Начисления"],
  ["d", 1, "+", "1.3.0.0.0000", "Оплата отвлечений", "Отвлечения", "", "", "bed", "Отвлечения"],
  ["d", 1, "+", "1.4.0.0.0000", "Материальные поощрения и пособия", "Поощрения", "", "", "bag", "Начисления"],
  ["d", 1, "+", "1.5.0.0.0000", "Территориальные надбавки", "Территориальные", "", "", "plus", "Территориальные"],
  ["d", 1, "+", "1.7.0.0.0000", "Социальные и компенсационные выплаты", "СоцКомпВыплаты", "", "", "ball", "Социальные"],
  ["d", 1, "+", "1.8.0.0.0000", "Выплаты совместителям и неработающим р", "ВыплатыНеработающ", "", "", "plus", "Начисления"],
  ["d", 1, "+", "1.9.0.0.0000", "Прочие и вспомогательные начисления", "ПрочВспомНачислени", "Прочие", "", "plus", "Начисления"],
  ["d", 0, "+", "2.0.0.0.0000", "Доходы (представление)", "Доходы", "", "", "flag", ""],
  ["d", 0, "+", "3.0.0.0.0000", "Удержания", "Удержания", "", "", "minus", ""],
  ["d", 0, "+", "4.0.0.0.0000", "Вычеты и скидки", "ВычетыИСкидки", "", "", "ball", ""],
  ["d", 0, "+", "5.0.0.0.0000", "Страховые взносы", "ЕСН", "ЕСН", "", "sv", "Единый социальн"],
  ["d", 0, "+", "6.0.0.0.0000", "Прочие доходы", "ПрочиеДоходы", "", "", "help", "Доходы"],
];

// name, value, kind, sign, filtered
const props = [
  ["Атрибуты", "Постоянный", "head"],
  ["Группа расходов", "Табель(ст.223 п.2 НК)", "edit", "+"],
  ["Программа", "Виды оплаты-Процентные надбавки-автопересчет"],
  ["Операция", "дб. 401.20.211 - кр. 302.11.737 (Начисление оплаты труд", "", "", true],
  ["Источник средств", "", "", "+"],
  ["Структурное подр", "непосредственное"],
  ["Аналитические при", ""],
  ["Операция (148н)", "Начисление сумм зарплаты, денежного довольствия (211)"],
  ["Учет месяцев при р", "Учитывать месяц оплаты согласно установкам"],
  ["Код дохода (на", "(2000) Вознаграждение, получаемое налогоплательщиком", "", "", true],
  ["Не учитывать в ин", "", "check"],
  ["Годовой", "нет", "check"],
  ["Код вида дохода (", "1–з/п и пр. с ограничениями взысканий (ст.99  ФЗ 229-ФЗ)"],
  ["Расчет", "Виды оплаты-Оклады-Расчет по карте"],
  ["Округление", "Без округления"],
  ["Не начислять за 1-", "нет", "check"],
  ["Тип финансировани", ""],
  ["Суб-ЭКР", ""],
  ["Направление расхо", ""],
  ["Тип денежных сред", ""],
  ["Код субсидии", ""],
  ["Мероприятие", ""],
];

const tasks = [
  ["win", "Пуск"], ["search", "Поиск"], ["city", "Город"], ["edge", "Edge"], ["ie", "Internet Explorer"],
  ["chrome", "Chrome", "run"], ["yandex", "Яндекс"], ["firefox", "Firefox"], ["opera", "Opera"], ["alien", "foobar2000"],
  ["folder", "Проводник"], ["eye", "Просмотр", "run"], ["floppy", "Total Commander"], ["calcApp", "Калькулятор"],
  ["sigmaDark", "Сигма"], ["sigmaCyan", "Сигма"], ["outlook", "Outlook"], ["excel", "Excel"], ["word", "Word", "run"],
  ["tv", "TeamViewer", "active"], ["telegram", "Telegram", "run"], ["sigma", "Сигма", "run"], ["acrobat", "Acrobat", "run"],
];

const floatItems = [
  ["ring", "Главная", false],
  ["bolt", "Действия", true],
  ["screen", "Просмотр", true],
  ["phone", "Общение", true],
  ["file", "Файлы и дополнительные возможности", true],
];

/* ---------- parts ---------- */

function TreeTwig({ kind, selected }) {
  return (
    <Twig width="7" height="7" viewBox="0 0 7 7" $dark={selected}>
      {(kind === "+" || kind === "-") && <path d="M1 3.500h5" stroke="currentColor" strokeWidth="1.400" />}
      {kind === "+" && <path d="M3.500 1v5" stroke="currentColor" strokeWidth="1.400" />}
      {kind === "." && <circle cx="3" cy="3.500" r="1.300" fill="#b0203a" />}
    </Twig>
  );
}

function PaymentTable() {
  return (
    <DataTable>
      <colgroup>
        {[14, 14, 101, 0, 74, 63, 42, 43, 64].map((w, i) => <Col key={i} $w={w} />)}
      </colgroup>
      <thead>
        <tr>
          <th colSpan="2" aria-label="Отметки">
            <svg width="12" height="9" viewBox="0 0 12 9"><path d="M2 1l1 1 1-1M2 4l1 1 1-1M2 7l1 1 1-1" fill="none" stroke="#222" /><path d="M6 1.500h5M6 4.500h5M6 7.500h5" stroke="#4646b4" /></svg>
          </th>
          {["Код", "Наименование", "Сокращение", "Заголовок", "Краткий ...", "Рисунок"].map((h) => <th key={h}>{h}</th>)}
          <th>
            <HeaderPager>
              <PagerButton aria-label="Назад"><svg width="3" height="4" viewBox="0 0 3 4"><path d="M3 0v4L0 2z" fill="#555" /></svg></PagerButton>
              <PagerButton aria-label="Далее"><svg width="3" height="4" viewBox="0 0 3 4"><path d="M0 0v4l3-2z" fill="#555" /></svg></PagerButton>
            </HeaderPager>
            Набор парам
          </th>
        </tr>
      </thead>
      <tbody>
        {rows.map(([mark, depth, twig, code, name, short, title, brief, pic, set, selected]) => (
          <DataRow key={code} $selected={selected}>
            <td>{mark && <Mark kind={mark} />}</td>
            <td>{selected && <svg width="10" height="7" viewBox="0 0 10 7"><path d="M5 0v7l4-3.500z" /></svg>}</td>
            <td>
              <Code $depth={depth}>
                <TreeTwig kind={twig} selected={selected} />
                {code}
              </Code>
            </td>
            <td>{name}</td>
            <td>{short}</td>
            <td>{title}</td>
            <td>{brief}</td>
            <td><Pic name={pic} /></td>
            <td>{set}</td>
          </DataRow>
        ))}
      </tbody>
    </DataTable>
  );
}

function PropValue({ name, value, kind }) {
  if (kind === "edit") {
    return (
      <EditCell>
        <EditInput aria-label={name} defaultValue={value} />
        <SmallButton aria-label="Выбрать"><svg width="7" height="2" viewBox="0 0 7 2"><path d="M0 0h1.500v2H0zM2.700 0h1.500v2H2.700zM5.400 0h1.500v2H5.400z" /></svg></SmallButton>
        <SmallButton aria-label="Открыть"><ChevronDown size={8} strokeWidth={5} /></SmallButton>
      </EditCell>
    );
  }
  if (kind === "check") {
    return <CheckLabel><CheckBox type="checkbox" aria-label={name} />{value}</CheckLabel>;
  }
  return value;
}

function PropsPanel() {
  return (
    <Props>
      <PropsTop><CloseBox aria-label="Закрыть"><X size={8} strokeWidth={4} /></CloseBox></PropsTop>
      <PropTabs>
        <PropTab $active>Параметры</PropTab>
        <PropTab $wide>Зависимости</PropTab>
        <PropTab>Поиск</PropTab>
        <PropTab>Связи</PropTab>
        <PropTab $wide>Программы</PropTab>
      </PropTabs>
      <PropTable>
        <colgroup><Col $w={74} /><Col /></colgroup>
        <tbody>
          {props.map(([name, value, kind, sign, filtered]) => (
            <tr key={name}>
              <th scope="row">
                <PropName $bold={kind === "head"}>
                  <PropSign>{sign}</PropSign>
                  <PropText>{name}</PropText>
                  {filtered && <svg width="9" height="8" viewBox="0 0 9 8"><path d="M1 1h6M2 3h4L4 6z" stroke="#1c1c8c" fill="#1c1c8c" /></svg>}
                </PropName>
              </th>
              <td><PropValue name={name} value={value} kind={kind} /></td>
            </tr>
          ))}
        </tbody>
      </PropTable>
    </Props>
  );
}

function SideNav() {
  return (
    <Side>
      <SearchRow>
        <SearchInput aria-label="Поиск" placeholder="Поиск..." />
        <CloseBox aria-label="Очистить"><X size={8} strokeWidth={4} /></CloseBox>
      </SearchRow>
      <NavList>
        {navItems.map(([icon, label, kind, active]) => (
          <NavItem key={icon} $sub={kind === "sub"} $active={active}>
            {(kind === "right" || kind === "down") && (
              <NavArrow width="5" height="5" viewBox="0 0 5 5">
                <path d={kind === "right" ? "M1 0v5l3-2.500z" : "M0 1h5L2.500 4z"} fill="#4a4a4a" />
              </NavArrow>
            )}
            <NavIcon name={icon} />
            {label}
          </NavItem>
        ))}
      </NavList>
    </Side>
  );
}

function taskDrawing(name) {
  if (name === "search") return <Search size={13} color="#eee" strokeWidth={2} transform="scale(-1 1)" />;
  if (name === "tv") return <TeamViewerMark size={16} />;
  if (name === "sigma") return <SigmaMark size={16} line="#c8ccd4" />;
  if (name === "sigmaDark") return <SigmaMark size={14} bg="#2a2a2a" fg="#fff" line="#0a0a0a" />;
  if (name === "sigmaCyan") return <SigmaMark size={14} bg="#2cb8d8" fg="#d8f6fb" line="#38c4e0" />;
  return <TaskIcon name={name} />;
}

function App() {
  return (
    <Page>
      <GlobalStyle />
      <TopBar>
        <TeamViewerMark size={11} />
        <TopTitle>Малмыжская ЦРБ (сервер) - TeamViewer</TopTitle>
        <TopButton aria-label="Свернуть"><Minus size={8} strokeWidth={3} /></TopButton>
        <TopButton aria-label="Развернуть"><Restore size={7} /></TopButton>
        <TopButton aria-label="Закрыть"><X size={11} strokeWidth={2} /></TopButton>
      </TopBar>
      <SessionTabs>
        <SessionTab>ЦКиН (Сервер 2018)<TabsButton aria-label="Закрыть"><X size={8} /></TabsButton></SessionTab>
        <SessionTab $active>Малмыжская ЦРБ (сервер)<TabsButton aria-label="Закрыть"><X size={8} /></TabsButton></SessionTab>
        <TabsButton $wide={34} aria-label="Новая вкладка"><Plus size={12} strokeWidth={2} /></TabsButton>
        <TabsSpacer />
        <TabsButton $wide={22} aria-label="Список"><ChevronDown size={10} /></TabsButton>
      </SessionTabs>

      <Stage>
        <FloatBar>
          <TabsButton $wide={13} aria-label="Закрыть сеанс"><X size={17} color="#222" strokeWidth={2} /></TabsButton>
          {floatItems.map(([icon, label, menu]) => (
            <FloatItem key={icon}>
              {floatIcons[icon]}
              {label}
              {menu && <Caret />}
            </FloatItem>
          ))}
          <TabsButton $wide={14} aria-label="Отзыв"><Smile /></TabsButton>
          <FloatHandle>
            <svg width="10" height="10" viewBox="0 0 10 10"><path d="M1 0v10M4 0v10M7 0v10M0 1h9M0 4h9M0 7h9" stroke="#bbb" fill="none" /></svg>
            <svg width="8" height="8" viewBox="0 0 8 8"><path d="M1 3V1h2M5 1h2v2M7 5v2H5M3 7H1V5" stroke="#777" fill="none" /></svg>
            <ChevronUp size={11} strokeWidth={3} color="#555" />
          </FloatHandle>
        </FloatBar>

        <Remote>
          <WinTitle>
            <SigmaMark size={10} />
            <WinCaption>Конфигуратор [Малмыжская ЦРБ 2018] [Бухгалтер по зарплате 2] (192.168.0.248:8080)</WinCaption>
            <WinButtons>
              <WinButton aria-label="Свернуть"><svg width="8" height="3" viewBox="0 0 8 3"><path d="M0 0h8v3H0z" fill="#fff" /></svg></WinButton>
              <WinButton aria-label="Развернуть"><Restore size={7} color="#fff" /></WinButton>
              <WinButton $close aria-label="Закрыть"><X size={9} color="#fff" strokeWidth={5} /></WinButton>
            </WinButtons>
          </WinTitle>
          <MenuStrip>
            {["Рабочее место", "Вид", "Настройки", "Справочники", "Справка"].map((m) => <MenuItem key={m}>{m}</MenuItem>)}
          </MenuStrip>
          <ToolStrip>
            <ToolButton>{toolIcons.back}Назад</ToolButton>
            <ToolButton aria-label="Вперед">{toolIcons.next}</ToolButton>
            <ToolButton $sep aria-label="Домой">{toolIcons.home}</ToolButton>
            <ToolButton $sep aria-label="Свойства">{toolIcons.sheet}</ToolButton>
            <ToolButton $sep aria-label="История">{toolIcons.clock}</ToolButton>
            <ToolButton aria-label="База">{toolIcons.db}</ToolButton>
          </ToolStrip>

          <Body>
            <SideNav />
            <Content>
              <Heading>Виды начислений и удержания</Heading>
              <ViewTabs>
                <ViewTab $active>Настройка параметров</ViewTab>
                <ViewTab>Группы расходов</ViewTab>
                <ViewTab>Отчеты</ViewTab>
              </ViewTabs>
              <Split>
                <PaymentTable />
                <Gutter><svg width="5" height="7" viewBox="0 0 5 7"><path d="M0 0v7l5-3.500z" /></svg></Gutter>
                <ScrollBar>
                  <ScrollArrow aria-label="Вверх"><svg width="5" height="3" viewBox="0 0 5 3"><path d="M0 3h5L2.500 0z" fill="#444" /></svg></ScrollArrow>
                  <Thumb><svg width="4" height="6" viewBox="0 0 4 6"><path d="M0 .5h4M0 2.500h4M0 4.500h4" stroke="#777" /></svg></Thumb>
                  <ScrollArrow aria-label="Вниз"><svg width="5" height="3" viewBox="0 0 5 3"><path d="M0 0h5L2.500 3z" fill="#444" /></svg></ScrollArrow>
                </ScrollBar>
                <PropsPanel />
              </Split>
            </Content>
          </Body>
          <StatusBar />

          <RemoteTaskbar>
            <OrbButton aria-label="Пуск">
              <svg width="25" height="25" viewBox="0 0 25 25">
                <defs>
                  <radialGradient id="orb" cx="50%" cy="85%" r="80%">
                    <stop offset="0" stopColor="#5fd0f0" /><stop offset=".5" stopColor="#1f6ea8" /><stop offset="1" stopColor="#9fb4c4" />
                  </radialGradient>
                </defs>
                <circle cx="12.500" cy="12.500" r="11.800" fill="url(#orb)" stroke="#4a6678" />
                <path d="m7 7 5-1-1 5.500-5 .5z" fill="#f0602a" /><path d="m13 6 5 1-1 5.500-5-1z" fill="#8cc63a" />
                <path d="m6 13 5-.5-1 5-5 .5z" fill="#3aa4e8" /><path d="m12 12.500 5 1-1 5-5-1z" fill="#fbd130" />
              </svg>
            </OrbButton>
            <RunningApp aria-label="Конфигуратор"><SigmaMark size={21} bg="#e6f2fa" line="#3f68a8" /></RunningApp>
            <Tray $gap={8}>
              <TrayLang>RU</TrayLang>
              <svg width="9" height="4" viewBox="0 0 9 4"><path d="M2 3.500h5L4.500 1z" fill="#fff" /></svg>
              <svg width="11" height="11" viewBox="0 0 11 11"><path d="M0 0h10v10H0z" fill="#d8dcdc" /><path d="M1 0h3v10H1zM9 0 4 5l2 2 4-5z" fill="#c8242c" /><path d="M6 6h4v4H6z" fill="#666" /></svg>
              <svg width="10" height="9" viewBox="0 0 10 9"><path d="M3 1.500h6.500v5H3zM5 8.500h4M1.500 0v4M0 1.500h3" fill="none" stroke="#e8e8e8" /></svg>
              <svg width="10" height="9" viewBox="0 0 10 9"><path d="M0 3h2l3-3v9L2 6H0z" fill="#eee" /><circle cx="7" cy="6" r="3" fill="#d83a34" /><path d="m6 5 2 2m0-2L6 7" stroke="#fff" /></svg>
              <Clock>{"11:53\n05.08.2022"}</Clock>
              <ShowDesktop aria-label="Показать рабочий стол" />
            </Tray>
          </RemoteTaskbar>

          <SideFlap>
            <svg width="17" height="36" viewBox="0 0 17 36">
              <path d="M3 0h14v36L0 26V3q0-3 3-3z" fill="#5a5e5e" /><path d="M3 5h14v13H3z" fill="#23506e" />
              <circle cx="9.500" cy="11.500" r="5.500" fill="#8ea2b0" /><path d="M5 11.500h9" stroke="#23506e" strokeWidth="2" />
            </svg>
          </SideFlap>
          <Pointer>
            <svg width="8" height="13" viewBox="0 0 8 13"><path d="M.5.5v9.500l2.200-2 1.500 4 1.600-.7-1.600-3.800h3z" fill="#fff" stroke="#333" strokeWidth=".7" /></svg>
          </Pointer>
        </Remote>
      </Stage>

      <Taskbar>
        {tasks.map(([name, label, state]) => (
          <TaskButton key={name} aria-label={label} $running={Boolean(state)} $active={state === "active"}>
            {taskDrawing(name)}
          </TaskButton>
        ))}
        <Tray $gap={6}>
          <ChevronUp size={11} strokeWidth={2} />
          <svg width="11" height="9" viewBox="0 0 11 9" fill="none" stroke="#eee"><path d="M.5 3h2l2.500-2.500v8L2.500 6h-2zM7 3v3M9 1.500v6" strokeWidth=".8" /></svg>
          <TrayLang>ENG</TrayLang>
          <Clock $line={12}>{"11:53\n05.08.2022"}</Clock>
          <TabsButton $wide={22} aria-label="Уведомления"><MessageSquare size={13} color="#eee" strokeWidth={2} /></TabsButton>
          <DesktopEdge aria-label="Свернуть все окна" />
        </Tray>
      </Taskbar>
    </Page>
  );
}

export default App;
